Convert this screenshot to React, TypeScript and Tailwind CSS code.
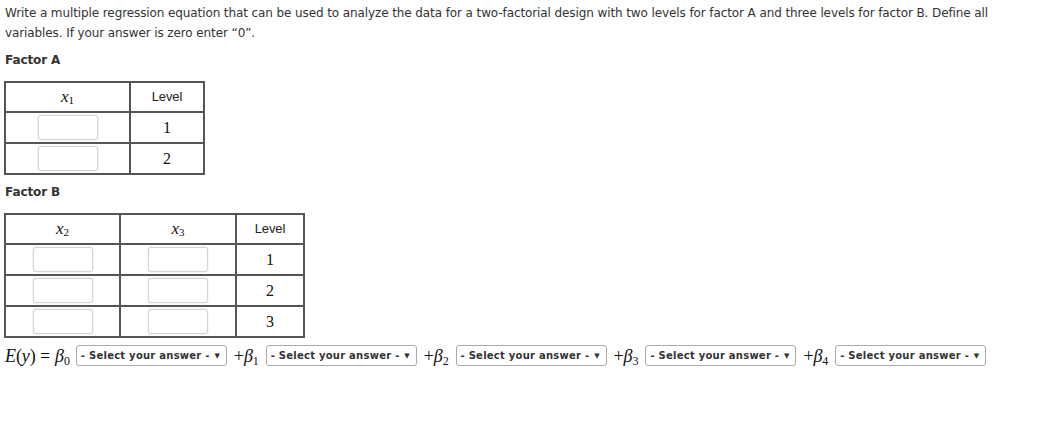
const textFont = "font-['Verdana','DejaVu_Sans',sans-serif]";

function Field() {
  return (
    <div className="mx-auto h-[25px] w-[60px] rounded-[3px] border border-[#d4d4d4] bg-white shadow-[0_0_2px_rgba(0,0,0,0.15)]" />
  );
}

function Sel() {
  return (
    <div className="flex h-[21px] w-[151px] shrink-0 items-center justify-between whitespace-nowrap rounded-[3px] border border-[#aaa] bg-white pl-[4px] pr-[6px] font-['Verdana','DejaVu_Sans',sans-serif] text-[10px] font-bold tracking-[0.25px] text-[#333]">
      <span>- Select your answer -</span>
      <span className="text-[7px] tracking-normal text-[#333]">▼</span>
    </div>
  );
}

function X({ n }: { n: number }) {
  return (
    <span className="font-['Liberation_Serif',serif] text-[17px] italic text-[#111]">
      x<sub className="text-[11px] not-italic">{n}</sub>
    </span>
  );
}

function Beta({ n }: { n: number }) {
  return (
    <span className="font-['Liberation_Serif',serif] text-[18px] text-[#111]">
      <i>β</i>
      <sub className="text-[12px]">{n}</sub>
    </span>
  );
}

const cell = "border-2 border-[#555] text-center align-middle";
const levelCls = "font-['Liberation_Sans',sans-serif] text-[13px] text-[#222]";
const numCls = "font-['Liberation_Serif',serif] text-[16px] text-[#111]";

export default function App() {
  return (
    <div className={`min-h-[422px] bg-white px-[5px] pt-[3px] ${textFont} text-[12px] tracking-[-0.1px] leading-[20px] text-[#333]`}>
      <p>
        Write a multiple regression equation that can be used to analyze the data for a two-factorial design with two levels for factor A and three levels for factor B. Define all variables. If your answer is zero enter “0”.
      </p>
      <p className="mt-[7px] font-bold">Factor A</p>

      <table className="mt-[11px] -ml-[1px] border-collapse">
        <tbody>
          <tr className="h-[30px]">
            <td className={`${cell} w-[125px]`}><X n={1} /></td>
            <td className={`${cell} w-[74px] ${levelCls}`}>Level</td>
          </tr>
          {[1, 2].map((l) => (
            <tr key={l} className="h-[31px]">
              <td className={cell}><Field /></td>
              <td className={`${cell} ${numCls}`}>{l}</td>
            </tr>
          ))}
        </tbody>
      </table>

      <p className="mt-[7px] font-bold">Factor B</p>

      <table className="mt-[11px] -ml-[1px] border-collapse">
        <tbody>
          <tr className="h-[30px]">
            <td className={`${cell} w-[115px]`}><X n={2} /></td>
            <td className={`${cell} w-[116px]`}><X n={3} /></td>
            <td className={`${cell} w-[68px] ${levelCls}`}>Level</td>
          </tr>
          {[1, 2, 3].map((l) => (
            <tr key={l} className="h-[31px]">
              <td className={cell}><Field /></td>
              <td className={cell}><Field /></td>
              <td className={`${cell} ${numCls}`}>{l}</td>
            </tr>
          ))}
        </tbody>
      </table>

      <div className="mt-[7px] flex items-center">
        <span className="mr-[5px] font-['Liberation_Serif',serif] text-[18px] text-[#111]">
          <i>E</i>(<i>y</i>) = 
        </span>
        <Beta n={0} />
        <div className="ml-[6px]"><Sel /></div>
        {[1, 2, 3, 4].map((n) => (
          <div key={n} className="flex items-center">
            <span className="ml-[7px] mr-[7px] font-['Liberation_Serif',serif] text-[18px] text-[#111]">
              +<Beta n={n} />
            </span>
            <Sel />
          </div>
        ))}
      </div>
    </div>
  );
}
